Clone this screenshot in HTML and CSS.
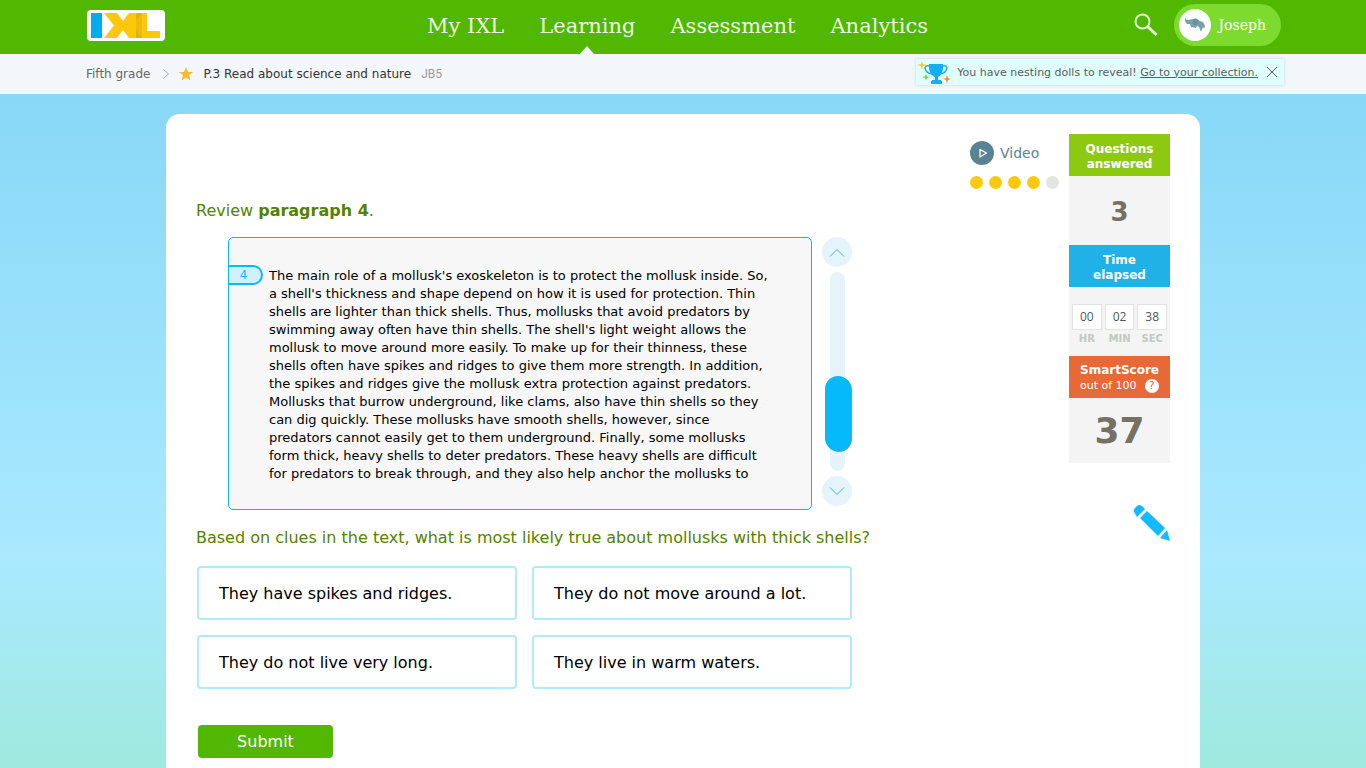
FILE: index.html
```
<!DOCTYPE html>
<html lang="en">
<head>
<meta charset="UTF-8">
<meta name="viewport" content="width=device-width, initial-scale=1.0">
<title>IXL | Read about science and nature</title>
<link rel="stylesheet" href="styles.css">
</head>
<body>
    <!-- Top bar -->
    <header class="site-header">
        <div class="container header-inner">
            <a href="#" class="logo" aria-label="IXL">
                <svg width="79" height="32" viewBox="0 0 79 32">
                    <rect x="1" width="78" height="31" rx="4" fill="#fff"/>
                    <rect x="5" y="3" width="11" height="25" fill="#00aeef"/>
                    <path d="M18 3H31L37 11L43 3H56V28H43L37 20L31 28H18L28 15.500Z" fill="#ffc60b"/>
                    <path d="M56 3V28H43L50 28V3Z" fill="#efbb0a"/>
                    <path d="M56 3L50 11V3ZM56 28L50 20V28Z" fill="#e3b00c"/>
                    <path d="M43 3L47 15.500L43 28H50V3Z" fill="#ffc60b"/>
                    <path d="M56 3H61V21H74V28H56Z" fill="#ffc60b"/>
                </svg>
            </a>
            <nav class="main-nav">
                <a href="#">My IXL</a>
                <a href="#" class="active">Learning</a>
                <a href="#">Assessment</a>
                <a href="#">Analytics</a>
            </nav>
            <div class="header-tools">
                <button class="search-btn" aria-label="Search">
                    <svg width="24" height="24" viewBox="0 0 24 24" fill="none" stroke="#e3f6d5">
                        <circle cx="8.500" cy="8.500" r="7" stroke-width="2"/>
                        <path d="M13 13l9.500 9" stroke-width="3"/>
                    </svg>
                </button>
                <button class="user-btn">
                    <svg width="32" height="32" viewBox="0 0 32 32">
                        <circle cx="16" cy="16" r="16" fill="#fff"/>
                        <path d="M6 9L8 11L15 10L16 9L18 10L21 12L24 13L26 17L25 20L24 18L22 23L20 18L18 17L17 19L12 18L11 15L8 15L6 12Z" fill="#78a2aa"/>
                        <path d="M15 10L18 10L20 13L17 17L13 14Z" fill="#6b949d"/>
                    </svg>
                    <span>Joseph</span>
                </button>
            </div>
        </div>
    </header>

    <!-- Breadcrumb bar -->
    <div class="crumb-bar">
        <div class="container crumb-inner">
            <div class="breadcrumb">
                <a href="#">Fifth grade</a>
                <svg class="crumb-arrow" width="6" height="10" viewBox="0 0 6 10" fill="none" stroke="#aaa"><path d="M.5.5l5 4.500-5 4.500"/></svg>
                <svg width="14" height="14" viewBox="0 0 14 14"><path d="M7 0l2 5h5l-4 3.300 1.500 5.200L7 10.500l-4.500 3L4 8.300 0 5h5z" fill="#fdb933"/></svg>
                <span class="skill-name">P.3 Read about science and nature</span>
                <span class="skill-code">JB5</span>
            </div>
            <div class="notice">
                <svg width="34" height="25" viewBox="0 0 34 25">
                    <path d="M12 4h14v3c0 6-2 8-5 10v3h3v1h1v3H14v-3h1v-1h3v-3c-4-2-6-5-6-10z" fill="#12b0f2"/>
                    <path d="M12 6C6 4 7 13 15 14M26 6C32 4 31 13 23 14" fill="none" stroke="#12b0f2" stroke-width="1.500"/>
                    <path d="M5 1l1 3 4 1-4 1-1 4-1-4-4-1 4-1z" fill="#ffc92e"/>
                    <path d="M9 14l1 2.500 3 .5-3 1-1 2.500-1-2.500-3-1 3-.5z" fill="#72d135"/>
                    <path d="M30 15l1 3 3 1-3 1-1 4-1-4-3-1 3-1z" fill="#f7931e"/>
                </svg>
                <span>You have nesting dolls to reveal! <a href="#">Go to your collection.</a></span>
                <button class="close-btn" aria-label="Close">
                    <svg width="12" height="12" viewBox="0 0 12 12" stroke="#555"><path d="M1 1l10 10M11 1L1 11"/></svg>
                </button>
            </div>
        </div>
    </div>

    <!-- Practice area -->
    <main class="practice">
        <div class="sheet">
            <section class="question">
                <p class="prompt">Review <b>paragraph 4</b>.</p>

                <div class="reader">
                    <div class="passage">
                        <span class="para-num">4</span>
                        <p>The main role of a mollusk's exoskeleton is to protect the mollusk inside. So, a shell's thickness and shape depend on how it is used for protection. Thin shells are lighter than thick shells. Thus, mollusks that avoid predators by swimming away often have thin shells. The shell's light weight allows the mollusk to move around more easily. To make up for their thinness, these shells often have spikes and ridges to give them more strength. In addition, the spikes and ridges give the mollusk extra protection against predators. Mollusks that burrow underground, like clams, also have thin shells so they can dig quickly. These mollusks have smooth shells, however, since predators cannot easily get to them underground. Finally, some mollusks form thick, heavy shells to deter predators. These heavy shells are difficult for predators to break through, and they also help anchor the mollusks to</p>
                    </div>
                    <div class="scroller">
                        <button class="scroll-btn" aria-label="Scroll up">
                            <svg width="16" height="9" viewBox="0 0 16 9" fill="none" stroke="#35b8f0"><path d="M1 8.500l7-7 7 7"/></svg>
                        </button>
                        <div class="track"><div class="thumb"></div></div>
                        <button class="scroll-btn" aria-label="Scroll down">
                            <svg width="16" height="9" viewBox="0 0 16 9" fill="none" stroke="#35b8f0"><path d="M1 .5l7 7 7-7"/></svg>
                        </button>
                    </div>
                </div>

                <p class="prompt">Based on clues in the text, what is most likely true about mollusks with thick shells?</p>

                <div class="answers">
                    <button class="answer">They have spikes and ridges.</button>
                    <button class="answer">They do not move around a lot.</button>
                    <button class="answer">They do not live very long.</button>
                    <button class="answer">They live in warm waters.</button>
                </div>

                <button class="submit-btn">Submit</button>
            </section>

            <div class="helpers">
                <a href="#" class="video-link">
                    <svg width="24" height="24" viewBox="0 0 24 24">
                        <circle cx="12" cy="12" r="12" fill="#598293"/>
                        <path d="M10 8.500l6.500 3.500-6.500 4z" fill="none" stroke="#fff" stroke-width="1.300" stroke-linejoin="round"/>
                    </svg>
                    Video
                </a>
                <div class="dots">
                    <span class="dot"></span>
                    <span class="dot"></span>
                    <span class="dot"></span>
                    <span class="dot"></span>
                    <span class="dot empty"></span>
                </div>
            </div>

            <aside class="side">
                <div class="stats">
                    <div class="stat-head green">Questions<br>answered</div>
                    <div class="stat-body answered">3</div>
                    <div class="stat-head blue">Time<br>elapsed</div>
                    <div class="stat-body timer">
                        <div class="unit"><span>00</span>HR</div>
                        <div class="unit"><span>02</span>MIN</div>
                        <div class="unit"><span>38</span>SEC</div>
                    </div>
                    <div class="stat-head orange">SmartScore
                        <div class="out-of">out of 100 <button class="help-btn" aria-label="About SmartScore">?</button></div>
                    </div>
                    <div class="stat-body score">37</div>
                </div>
                <button class="pencil-btn" aria-label="Work it out">
                    <svg width="38" height="38" viewBox="0 0 38 38" fill="#10bbff">
                        <path d="M2 8q-1-2 1-4l2-2q2-2 5 0l3 3-8 8z"/>
                        <path d="M15 7l18 17-7 8L8 14z"/>
                        <path d="M35 26l3 11-10-3z"/>
                    </svg>
                </button>
            </aside>
        </div>
    </main>
</body>
</html>
```
FILE: styles.css
```
* {
    box-sizing: border-box;
}

body {
    margin: 0;
    min-height: 100vh;
    display: flex;
    flex-direction: column;
    font-family: Verdana, "DejaVu Sans", sans-serif;
    font-size: 12px;
    color: #000;
}

button {
    padding: 0;
    border: none;
    background: none;
    font-family: inherit;
    cursor: pointer;
}

a {
    color: inherit;
    text-decoration: none;
}

svg {
    display: block;
    flex-shrink: 0;
}

.container {
    width: 100%;
    max-width: 1202px;
    margin: 0 auto;
}

/* Header */
.site-header {
    background: #52b700;
}

.header-inner {
    display: grid;
    grid-template-columns: 1fr auto 1fr;
    align-items: center;
    height: 54px;
    padding: 0 3px 2px 4px;
}

.main-nav {
    display: flex;
    gap: 35px;
    padding-right: 12px;
    font-family: "Roboto Slab", "DejaVu Serif", serif;
    font-size: 21px;
    line-height: 52px;
    color: #edf9e3;
}

.main-nav a {
    position: relative;
}

.main-nav .active::after {
    content: "";
    position: absolute;
    left: 50%;
    bottom: -2px;
    margin-left: -7px;
    border: 7px solid transparent;
    border-top: none;
    border-bottom: 8px solid #f3f7fb;
}

.header-tools {
    display: flex;
    justify-content: flex-end;
    align-items: center;
    gap: 16px;
    padding-bottom: 2px;
}

.user-btn {
    display: flex;
    align-items: center;
    gap: 8px;
    height: 42px;
    padding: 0 15px 0 5px;
    border-radius: 21px;
    background: #7cdb2e;
    color: #fff;
    font-family: "Roboto Slab", "DejaVu Serif", serif;
    font-size: 14px;
}

/* Breadcrumb */
.crumb-bar {
    background: #f3f7fb;
}

.crumb-inner {
    display: flex;
    justify-content: space-between;
    align-items: center;
    height: 40px;
    padding-left: 4px;
}

.breadcrumb {
    display: flex;
    align-items: center;
    gap: 10px;
    color: #666;
}

.crumb-arrow {
    margin-left: 3px;
}

.skill-name {
    color: #333;
}

.skill-code {
    color: #999;
    font-family: Roboto, sans-serif;
}

.notice {
    display: flex;
    align-items: center;
    gap: 6px;
    height: 26px;
    margin-bottom: 4px;
    padding: 0 6px 0 1px;
    background: #e0ffff;
    box-shadow: 0 0 3px #c5d5dc;
    font-size: 11px;
    color: #5c5c5c;
}

.notice a {
    text-decoration: underline;
}

.close-btn {
    margin-left: 2px;
}

/* Practice sheet */
.practice {
    flex: 1;
    padding-top: 20px;
    background: linear-gradient(#88d8f7, #aae9ff 69%, #9fe9df);
}

.sheet {
    display: flex;
    align-items: flex-start;
    width: 100%;
    max-width: 1034px;
    min-height: 100%;
    margin: 0 auto;
    padding: 20px 30px 10px;
    border-radius: 14px 14px 0 0;
    background: #fff;
}

.question {
    flex: 1;
    padding-top: 67px;
}

.prompt {
    margin: 0;
    font-size: 16px;
    line-height: 20px;
    color: #548200;
}

.reader {
    display: flex;
    gap: 10px;
    margin: 16px 0 18px 32px;
}

.passage {
    display: flex;
    align-items: flex-start;
    gap: 6px;
    width: 584px;
    height: 273px;
    padding: 27px 37px 0 0;
    overflow: hidden;
    border: 1px solid #06b9f8;
    border-radius: 5px;
    background: #f7f7f7;
}

.passage p {
    flex: 1;
    margin: 2px 0 0;
    font-size: 13px;
    line-height: 18px;
}

.para-num {
    width: 34px;
    height: 20px;
    padding-right: 3px;
    border: 2px solid #06b9f8;
    border-left: none;
    border-radius: 0 10px 10px 0;
    background: #d0f1ff;
    color: #1fb6ee;
    font-size: 12px;
    line-height: 17px;
    text-align: center;
}

.scroller {
    display: flex;
    flex-direction: column;
    align-items: center;
    gap: 5px;
    width: 30px;
}

.scroll-btn {
    display: flex;
    align-items: center;
    justify-content: center;
    width: 30px;
    height: 30px;
    border-radius: 50%;
    background: #e4f4fa;
}

.track {
    position: relative;
    width: 15px;
    height: 199px;
    border-radius: 8px;
    background: #e4f4fa;
}

.thumb {
    position: absolute;
    top: 104px;
    left: -5px;
    width: 26px;
    height: 75px;
    border-radius: 13px;
    background: #06b9f8;
    box-shadow: 1px 1px 0 #4aa5cc;
}

.answers {
    display: grid;
    grid-template-columns: 320px 320px;
    gap: 15px;
    margin: 18px 0 36px 1px;
}

.answer {
    height: 54px;
    padding: 0 20px;
    border: 2px solid #b0eafc;
    border-radius: 4px;
    background: #fff;
    color: #000;
    font-size: 16px;
    text-align: left;
}

.submit-btn {
    width: 135px;
    height: 33px;
    margin-left: 2px;
    border-radius: 4px;
    background: #52b700;
    color: #fff;
    font-size: 16px;
}

/* Video link and progress dots */
.helpers {
    margin: 7px 10px 0 0;
}

.video-link {
    display: flex;
    align-items: center;
    gap: 6px;
    font-size: 14px;
    color: #598293;
}

.dots {
    display: flex;
    gap: 6px;
    margin-top: 11px;
}

.dot {
    width: 13px;
    height: 13px;
    border-radius: 50%;
    background: #ffc90b;
}

.dot.empty {
    background: #e4e4e0;
}

/* Score column */
.side {
    display: flex;
    flex-direction: column;
    align-items: flex-end;
}

.stats {
    width: 101px;
    background: #f4f4f4;
}

.stat-head {
    height: 42px;
    padding-top: 8px;
    color: #fff;
    font-weight: bold;
    line-height: 15px;
    text-align: center;
}

.green {
    background: #8ec912;
}

.blue {
    background: #20b2e7;
}

.orange {
    padding: 7px 0 0 11px;
    background: #e76938;
    text-align: left;
}

.stat-body {
    color: #767065;
    font-weight: bold;
    text-align: center;
}

.answered {
    padding-top: 3px;
    font-size: 26px;
    line-height: 66px;
}

.timer {
    display: flex;
    justify-content: center;
    gap: 3px;
    height: 69px;
    padding: 17px 3px 0;
}

.unit {
    flex: 1;
    color: #c2c8c2;
    font-size: 10px;
    line-height: 18px;
}

.unit span {
    display: block;
    height: 26px;
    border: 1px solid #e2e2e2;
    background: #fff;
    color: #4a5a5a;
    font-family: "Open Sans", sans-serif;
    font-size: 12px;
    font-weight: normal;
    line-height: 24px;
}

.out-of {
    display: flex;
    align-items: center;
    gap: 8px;
    font-size: 11px;
    font-weight: normal;
}

.help-btn {
    width: 14px;
    height: 14px;
    border-radius: 50%;
    background: #fff;
    color: #e76938;
    font-size: 11px;
    line-height: 14px;
}

.score {
    padding-top: 1px;
    font-size: 36px;
    line-height: 64px;
}

.pencil-btn {
    margin-top: 41px;
}
```
